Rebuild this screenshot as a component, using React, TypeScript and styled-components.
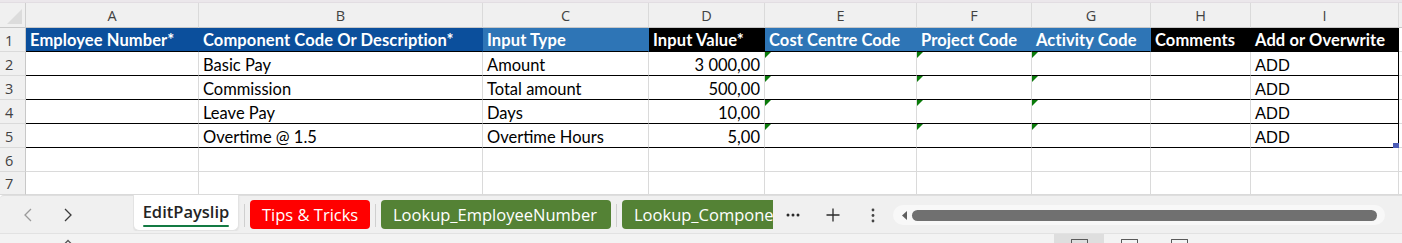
import React from "react";
import styled, { createGlobalStyle, css } from "styled-components";

const GlobalStyle = createGlobalStyle`
  html, body {
    margin: 0;
    padding: 0;
    background: #fff;
    overflow: hidden;
  }
  * {
    box-sizing: border-box;
  }
`;

type Tone = "navy" | "blue" | "black";

const COLUMNS: { letter: string; width: number; title: string; tone: Tone }[] = [
  { letter: "A", width: 173, title: "Employee Number*", tone: "navy" },
  { letter: "B", width: 284, title: "Component Code Or Description*", tone: "navy" },
  { letter: "C", width: 166, title: "Input Type", tone: "blue" },
  { letter: "D", width: 116, title: "Input Value*", tone: "black" },
  { letter: "E", width: 152, title: "Cost Centre Code", tone: "blue" },
  { letter: "F", width: 115, title: "Project Code", tone: "blue" },
  { letter: "G", width: 119, title: "Activity Code", tone: "blue" },
  { letter: "H", width: 100, title: "Comments", tone: "black" },
  { letter: "I", width: 148, title: "Add or Overwrite", tone: "black" },
];

const ROWS = [
  ["", "Basic Pay", "Amount", "3 000,00", "", "", "", "", "ADD"],
  ["", "Commission", "Total amount", "500,00", "", "", "", "", "ADD"],
  ["", "Leave Pay", "Days", "10,00", "", "", "", "", "ADD"],
  ["", "Overtime @ 1.5", "Overtime Hours", "5,00", "", "", "", "", "ADD"],
];

const TONES: Record<Tone, string> = {
  navy: "#0b4f9c",
  blue: "#2e75b6",
  black: "#000000",
};

const FLAGGED = [4, 5, 6];

const Frame = styled.div`
  width: 1402px;
  height: 243px;
  display: flex;
  flex-direction: column;
  overflow: hidden;
  background: #fff;
`;

const TopStrip = styled.div`
  height: 3px;
  background: #ebe7eb;
  border-bottom: 1px solid #e2dde2;
  flex-shrink: 0;
`;

const Sheet = styled.div`
  display: grid;
  grid-template-columns: 26px ${COLUMNS.map((c) => `${c.width}px`).join(" ")} 1fr;
  grid-template-rows: 25px repeat(6, 24px) 23px;
  height: 192px;
  overflow: hidden;
  flex-shrink: 0;
`;

const Corner = styled.div`
  position: relative;
  background: #f0f0f0;
  border-right: 1px solid #cfcfcf;
  border-bottom: 1px solid #c8c8c8;

  &::after {
    content: "";
    position: absolute;
    right: 3px;
    bottom: 3px;
    border-style: solid;
    border-width: 0 0 15px 15px;
    border-color: transparent transparent #dcdcdc transparent;
  }
`;

const ColHead = styled.div`
  background: #f0f0f0;
  border-right: 1px solid #dadada;
  border-bottom: 1px solid #c8c8c8;
  color: #424242;
  font-family: "Open Sans", "Noto Sans", sans-serif;
  font-size: 14.5px;
  display: flex;
  align-items: center;
  justify-content: center;
  padding-top: 1px;
`;

const RowHead = styled.div`
  background: #f0f0f0;
  border-right: 1px solid #c8c8c8;
  border-bottom: 1px solid #dadada;
  color: #424242;
  font-family: "Open Sans", "Noto Sans", sans-serif;
  font-size: 14.5px;
  display: flex;
  align-items: center;
  padding: 1px 0 0 5px;
`;

const HeadCell = styled.div<{ $tone: Tone; $edge?: boolean }>`
  background: ${(p) => TONES[p.$tone]};
  border-right: 1px solid ${(p) => (p.$edge ? "#000" : TONES[p.$tone])};
  border-bottom: 1px solid #000;
  color: #fff;
  font-family: Lato, "Liberation Sans", sans-serif;
  font-weight: 700;
  font-size: 16.5px;
  letter-spacing: 0.1px;
  white-space: nowrap;
  overflow: hidden;
  display: flex;
  align-items: flex-end;
  padding: 0 0 1px 4px;
`;

const DataCell = styled.div<{
  $right?: boolean;
  $arial?: boolean;
  $flag?: boolean;
  $dark?: boolean;
  $edge?: boolean;
}>`
  position: relative;
  border-right: 1px solid ${(p) => (p.$edge ? "#000" : "#dadada")};
  border-bottom: 1px solid ${(p) => (p.$dark ? "#000" : "#dadada")};
  color: #000;
  font-family: ${(p) => (p.$arial ? '"Liberation Sans", Arial, sans-serif' : 'Lato, "Liberation Sans", sans-serif')};
  font-size: 16.5px;
  line-height: 20px;
  white-space: nowrap;
  display: flex;
  align-items: flex-end;
  justify-content: ${(p) => (p.$right ? "flex-end" : "flex-start")};
  padding: 0 4px 0 4px;

  ${(p) =>
    p.$flag &&
    css`
      &::before {
        content: "";
        position: absolute;
        left: 0;
        top: 0;
        border-style: solid;
        border-width: 6px 6px 0 0;
        border-color: #0a7a0a transparent transparent transparent;
      }
    `}
`;

const FillHandle = styled.span`
  position: absolute;
  right: -1px;
  bottom: -1px;
  width: 6px;
  height: 5px;
  background: #4b5bb5;
`;

const TabBar = styled.div`
  height: 38px;
  flex-shrink: 0;
  display: flex;
  align-items: flex-start;
  background: #f0f0f0;
  border-top: 1px solid #dedede;
  border-top-left-radius: 4px;
`;

const NavGroup = styled.div`
  width: 133px;
  flex-shrink: 0;
  display: flex;
  gap: 12px;
  padding: 6px 0 0 14px;
`;

const NavButton = styled.div<{ $disabled?: boolean }>`
  width: 28px;
  height: 26px;
  display: flex;
  align-items: center;
  justify-content: center;
  color: ${(p) => (p.$disabled ? "#9a9a9a" : "#3a3a3a")};
`;

const TabStrip = styled.div`
  width: 640px;
  flex-shrink: 0;
  display: flex;
  align-items: flex-start;
  overflow: hidden;
  margin-top: -1px;
`;

const SheetTab = styled.div<{ $color?: string; $width: number }>`
  flex-shrink: 0;
  width: ${(p) => p.$width}px;
  white-space: nowrap;
  font-family: "Open Sans", "Noto Sans", sans-serif;
  font-size: 16.5px;
  display: flex;
  align-items: center;
  justify-content: center;
  ${(p) =>
    p.$color
      ? css`
          height: 29px;
          margin-top: 5px;
          border-radius: 4px;
          background: ${p.$color};
          color: #fff;
          justify-content: flex-start;
          padding-left: 12px;
          overflow: hidden;
        `
      : css`
          height: 36px;
          background: #fff;
          color: #242424;
          font-weight: 600;
          border: 1px solid #e3e3e3;
          border-top: none;
          border-radius: 0 0 6px 6px;
          box-shadow: 0 1px 2px rgba(0, 0, 0, 0.08);
        `}
`;

const TabLabel = styled.span`
  position: relative;
  padding-bottom: 2px;
`;

const ActiveMark = styled.span`
  position: absolute;
  left: 0;
  right: 0;
  bottom: -2px;
  height: 2px;
  border-radius: 1px;
  background: #137a43;
`;

const TabDivider = styled.div`
  width: 1px;
  height: 23px;
  margin: 9px 5px 0;
  background: #cfcfcf;
  flex-shrink: 0;
`;

const ToolButton = styled.div`
  width: 40px;
  height: 26px;
  margin-top: 6px;
  flex-shrink: 0;
  display: flex;
  align-items: center;
  justify-content: center;
  color: #2a2a2a;
`;

const ScrollTrack = styled.div`
  width: 492px;
  height: 20px;
  margin-top: 9px;
  flex-shrink: 0;
  border-radius: 10px;
  background: #f8f8f8;
  display: flex;
  align-items: center;
  padding-left: 9px;
  gap: 5px;
`;

const ScrollThumb = styled.div`
  width: 465px;
  height: 11px;
  border-radius: 6px;
  background: #707070;
`;

const StatusBar = styled.div`
  flex: 1;
  background: #f3f3f3;
  border-top: 1px solid #e2e2e2;
  display: flex;
  align-items: flex-start;
  overflow: hidden;
`;

const StatusCaret = styled.div`
  width: 14px;
  margin: 5px 0 0 61px;
  display: flex;
  justify-content: center;
`;

const ViewGroup = styled.div`
  display: flex;
  margin-left: 979px;
`;

const ViewButton = styled.div<{ $on?: boolean }>`
  width: 50px;
  height: 12px;
  display: flex;
  justify-content: center;
  padding-top: 5px;
  background: ${(p) => (p.$on ? "#dedede" : "transparent")};
`;

const ViewIcon = styled.div`
  width: 17px;
  height: 8px;
  border: 1.5px solid #5a5a5a;
  border-bottom: none;
  border-radius: 1px 1px 0 0;
`;

const Chevron = ({ dir }: { dir: "left" | "right" }) => (
  <svg width="8" height="14" viewBox="0 0 8 14">
    <polyline
      points={dir === "left" ? "7,1 1,7 7,13" : "1,1 7,7 1,13"}
      fill="none"
      stroke="currentColor"
      strokeWidth="1.3"
    />
  </svg>
);

export default function App() {
  return (
    <>
      <GlobalStyle />
      <Frame>
        <TopStrip />
        <Sheet>
          <Corner />
          {COLUMNS.map((c) => (
            <ColHead key={c.letter}>{c.letter}</ColHead>
          ))}
          <ColHead />

          <RowHead>1</RowHead>
          {COLUMNS.map((c, i) => (
            <HeadCell key={c.letter} $tone={c.tone} $edge={i === COLUMNS.length - 1}>
              {c.title}
            </HeadCell>
          ))}
          <DataCell />

          {ROWS.map((row, r) => (
            <React.Fragment key={r}>
              <RowHead>{r + 2}</RowHead>
              {row.map((value, c) => (
                <DataCell
                  key={c}
                  $dark
                  $right={c === 3}
                  $arial={c === 8}
                  $flag={FLAGGED.includes(c)}
                  $edge={c === 8}
                >
                  {value}
                  {r === ROWS.length - 1 && c === 8 && <FillHandle />}
                </DataCell>
              ))}
              <DataCell />
            </React.Fragment>
          ))}

          {[6, 7].map((n) => (
            <React.Fragment key={n}>
              <RowHead>{n}</RowHead>
              {COLUMNS.map((c) => (
                <DataCell key={c.letter} />
              ))}
              <DataCell />
            </React.Fragment>
          ))}
        </Sheet>

        <TabBar>
          <NavGroup>
            <NavButton $disabled>
              <Chevron dir="left" />
            </NavButton>
            <NavButton>
              <Chevron dir="right" />
            </NavButton>
          </NavGroup>

          <TabStrip>
            <SheetTab $width={106}>
              <TabLabel>
                EditPayslip
                <ActiveMark />
              </TabLabel>
            </SheetTab>
            <TabDivider />
            <SheetTab $width={120} $color="#ff0000">
              Tips &amp; Tricks
            </SheetTab>
            <TabDivider />
            <SheetTab $width={230} $color="#548235">
              Lookup_EmployeeNumber
            </SheetTab>
            <TabDivider />
            <SheetTab $width={200} $color="#548235">
              Lookup_ComponentCode
            </SheetTab>
          </TabStrip>

          <ToolButton>
            <svg width="14" height="4" viewBox="0 0 14 4">
              <circle cx="2" cy="2" r="1.5" fill="currentColor" />
              <circle cx="7" cy="2" r="1.5" fill="currentColor" />
              <circle cx="12" cy="2" r="1.5" fill="currentColor" />
            </svg>
          </ToolButton>
          <ToolButton>
            <svg width="14" height="14" viewBox="0 0 14 14">
              <path d="M7 0.5V13.5M0.5 7H13.5" stroke="currentColor" strokeWidth="1.3" />
            </svg>
          </ToolButton>
          <ToolButton>
            <svg width="4" height="15" viewBox="0 0 4 15">
              <circle cx="2" cy="2" r="1.4" fill="#444" />
              <circle cx="2" cy="7.5" r="1.4" fill="#444" />
              <circle cx="2" cy="13" r="1.4" fill="#444" />
            </svg>
          </ToolButton>

          <ScrollTrack>
            <svg width="5" height="9" viewBox="0 0 5 9">
              <polygon points="5,0 0,4.5 5,9" fill="#5f5f5f" />
            </svg>
            <ScrollThumb />
          </ScrollTrack>
        </TabBar>

        <StatusBar>
          <StatusCaret>
            <svg width="8" height="5" viewBox="0 0 8 5">
              <polyline points="1,4.5 4,1.5 7,4.5" fill="none" stroke="#555" strokeWidth="1.3" />
            </svg>
          </StatusCaret>
          <ViewGroup>
            <ViewButton $on>
              <ViewIcon />
            </ViewButton>
            <ViewButton>
              <ViewIcon />
            </ViewButton>
            <ViewButton>
              <ViewIcon />
            </ViewButton>
          </ViewGroup>
        </StatusBar>
      </Frame>
    </>
  );
}
